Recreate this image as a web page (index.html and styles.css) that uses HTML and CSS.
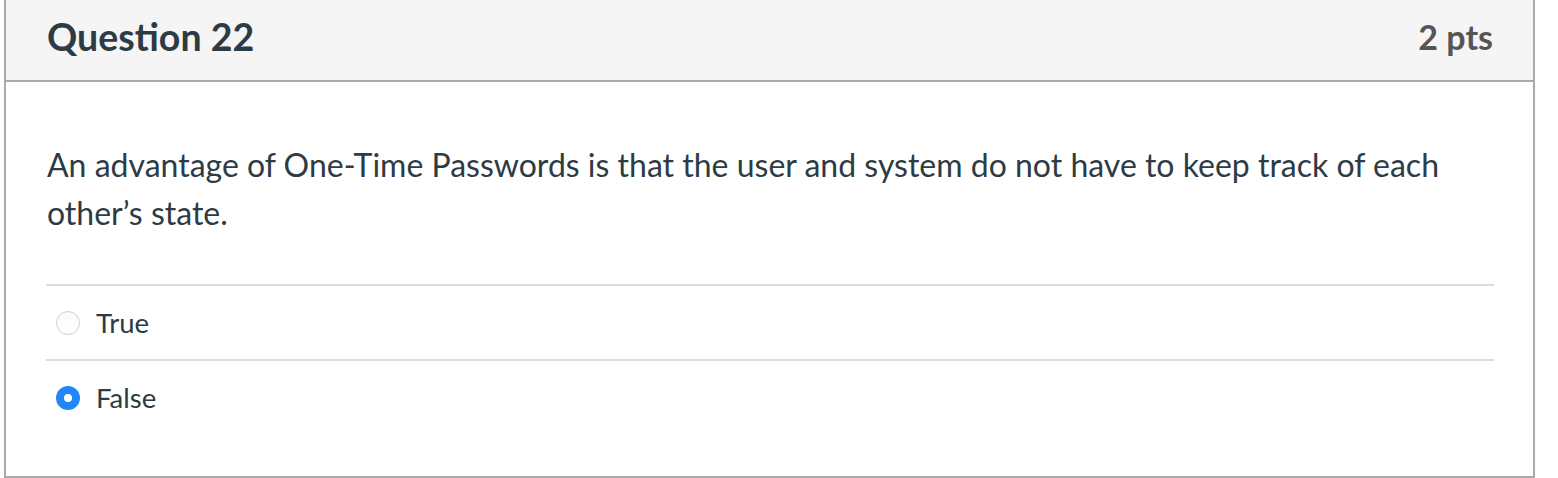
FILE: index.html
```html
<!DOCTYPE html>
<html>
<head>
<meta charset="utf-8">
<link rel="stylesheet" href="styles.css">
</head>
<body>
<div class="question">
  <div class="q-header">
    <h2 class="q-title">Question 22</h2>
    <div class="q-points">2 pts</div>
  </div>
  <div class="q-body">
    <p class="q-text">An advantage of One-Time Passwords is that the user and system do not have to keep track of each other’s state.</p>
    <div class="answers">
      <label class="answer">
        <span class="radio"></span>
        <span class="answer-label">True</span>
      </label>
      <label class="answer">
        <span class="radio checked"></span>
        <span class="answer-label">False</span>
      </label>
    </div>
  </div>
</div>
</body>
</html>
```

FILE: styles.css
```css
html, body {
  margin: 0;
  padding: 0;
  background: #fff;
}
body {
  font-family: Lato, "Open Sans", sans-serif;
  color: #2d3b45;
}
.question {
  margin-left: 4px;
  width: 1527px;
  height: 476px;
  border: 2px solid #aaaaaa;
  border-top: none;
  display: flex;
  flex-direction: column;
}
.q-header {
  height: 82px;
  background: #f5f5f5;
  border-bottom: 2px solid #aaaaaa;
  display: flex;
  align-items: center;
  justify-content: space-between;
  padding: 0 40px 6px 41px;
  box-sizing: border-box;
  flex-shrink: 0;
}
.q-title {
  margin: 0;
  font-size: 37.5px;
  line-height: 40px;
  font-weight: 700;
  color: #2d3b45;
}
.q-points {
  font-size: 34px;
  line-height: 40px;
  font-weight: 700;
  color: #555555;
}
.q-body {
  padding: 59px 39px 0 40px;
}
.q-text {
  margin: 0 0 0 1px;
  font-size: 32px;
  line-height: 48px;
}
.answers {
  margin-top: 47px;
}
.answer {
  display: flex;
  align-items: center;
  height: 73px;
  border-top: 2px solid #dddddd;
}
.radio {
  width: 24px;
  height: 24px;
  border-radius: 50%;
  box-sizing: border-box;
  border: 1px solid #d0d0d0;
  background: linear-gradient(#fafafa, #ffffff);
  margin-left: 10px;
  margin-right: 16px;
}
.radio.checked {
  border: 8px solid #2186f6;
  background: #fff;
}
.answer-label {
  font-size: 27.5px;
}
```
